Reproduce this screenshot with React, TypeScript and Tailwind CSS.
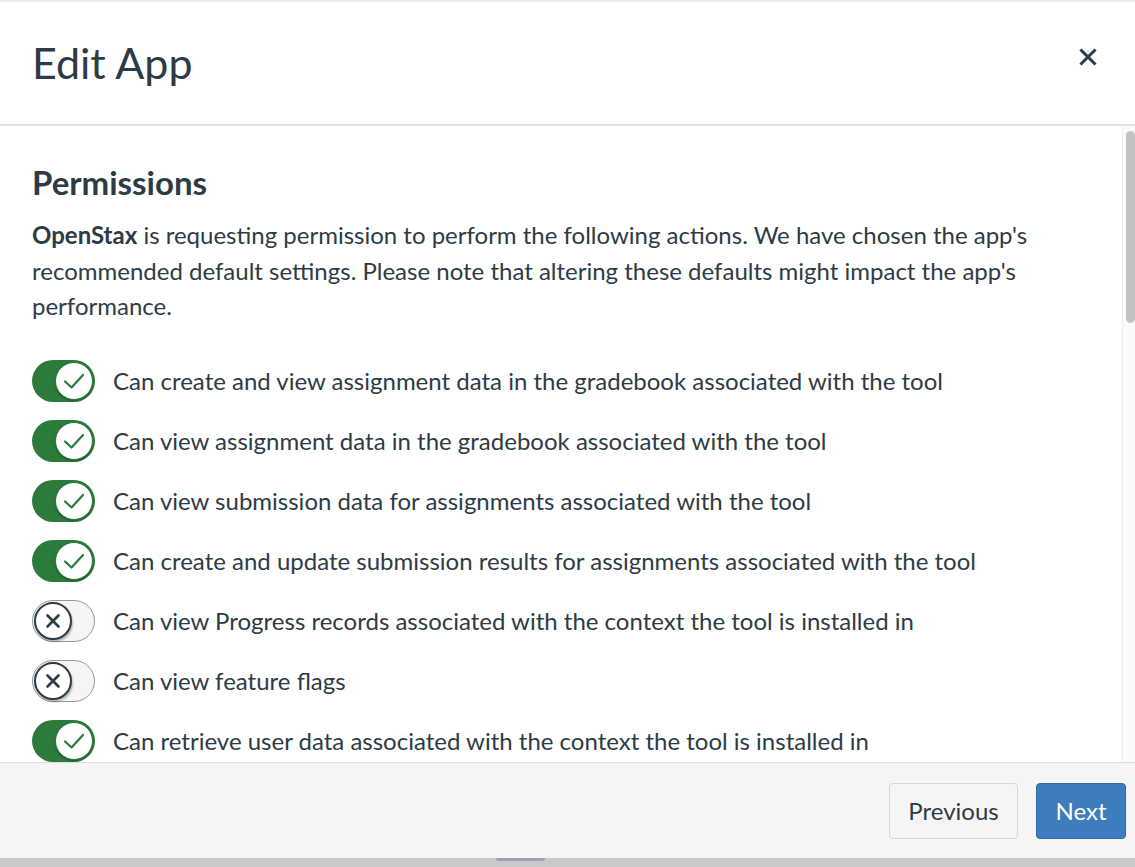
import React from "react";

const perms: { label: string; on: boolean }[] = [
  { label: "Can create and view assignment data in the gradebook associated with the tool", on: true },
  { label: "Can view assignment data in the gradebook associated with the tool", on: true },
  { label: "Can view submission data for assignments associated with the tool", on: true },
  { label: "Can create and update submission results for assignments associated with the tool", on: true },
  { label: "Can view Progress records associated with the context the tool is installed in", on: false },
  { label: "Can view feature flags", on: false },
  { label: "Can retrieve user data associated with the context the tool is installed in", on: true },
];

function Toggle({ on }: { on: boolean }) {
  if (on) {
    return (
      <div className="w-[63px] h-[42px] rounded-full bg-[#2b7b3b] flex items-center justify-end pr-[2px] shrink-0">
        <div className="w-[38px] h-[38px] rounded-full bg-white border border-[#2b7b3b] flex items-center justify-center shadow-[0_1px_2px_rgba(0,0,0,0.3)]">
          <svg width="36" height="36" viewBox="0 0 36 36" fill="none">
            <path d="M9 18.5 L15.5 24.5 L27 12" stroke="#2b7b3b" strokeWidth="2.2" strokeLinecap="round" strokeLinejoin="round" />
          </svg>
        </div>
      </div>
    );
  }
  return (
    <div className="w-[63px] h-[42px] rounded-full bg-[#f5f5f5] border border-[#8f9aa3] flex items-center pl-[1px] shrink-0">
      <div className="w-[38px] h-[38px] rounded-full bg-white border-2 border-[#2d3b45] flex items-center justify-center shadow-[1px_2px_2px_rgba(0,0,0,0.25)]">
        <svg width="16" height="16" viewBox="0 0 16 16" fill="none">
          <path d="M2.5 2.5 L13.5 13.5 M13.5 2.5 L2.5 13.5" stroke="#2d3b45" strokeWidth="2.6" strokeLinecap="round" />
        </svg>
      </div>
    </div>
  );
}

export default function App() {
  return (
    <div
      className="w-[1135px] h-[867px] bg-white flex flex-col text-[#2d3b45] overflow-hidden"
      style={{ fontFamily: "Lato, 'Noto Sans', sans-serif" }}
    >
      <div className="h-[2px] bg-[#ececec] shrink-0" />
      <div className="h-[124px] flex items-center justify-between pl-[32px] pr-[38px] border-b-2 border-[#e0e0e0] shrink-0">
        <h1 className="text-[43px] leading-none font-normal mt-[-2px]">Edit App</h1>
        <svg width="18" height="18" viewBox="0 0 18 18" fill="none" className="mt-[-12px]">
          <path d="M2.5 2.5 L15.5 15.5 M15.5 2.5 L2.5 15.5" stroke="#2d3b45" strokeWidth="3" strokeLinecap="square" />
        </svg>
      </div>
      <div className="flex flex-1 min-h-0 border-b border-[#dcdcdc]">
        <div className="flex-1 pl-[32px] pt-[40px] overflow-hidden">
          <h2 className="text-[33px] font-bold leading-none mb-[18px]">Permissions</h2>
          <p className="text-[24px] leading-[35.5px] pr-[60px]">
            <span className="font-bold">OpenStax</span> is requesting permission to perform the following actions. We have chosen the app's recommended default settings. Please note that altering these defaults might impact the app's performance.
          </p>
          <div className="mt-[36px] flex flex-col gap-[18px]">
            {perms.map((p) => (
              <div key={p.label} className="flex items-center gap-[18px]">
                <Toggle on={p.on} />
                <span className="text-[24px] leading-none whitespace-nowrap">{p.label}</span>
              </div>
            ))}
          </div>
        </div>
        <div className="w-[13px] border-l border-[#ececec] bg-[#fafafa] pt-[5px] pl-[3px] shrink-0">
          <div className="w-[9px] h-[192px] rounded-full bg-[#c2c2c2]" />
        </div>
      </div>
      <div className="h-[95px] bg-[#f5f5f5] flex items-center justify-end gap-[18px] pr-[9px] shrink-0">
        <button className="h-[56px] w-[129px] rounded-[4px] border border-[#d5d7d9] bg-[#f5f5f5] text-[24px] text-[#2d3b45]">
          Previous
        </button>
        <button className="h-[56px] w-[90px] rounded-[4px] border border-[#2c6aa6] bg-[#3e7dbd] text-[24px] text-white">
          Next
        </button>
      </div>
      <div className="h-[9px] bg-[#c9c9c9] flex justify-start pl-[496px] shrink-0">
        <div className="w-[49px] h-[3px] rounded-b bg-[#9aa4ad]" />
      </div>
    </div>
  );
}
